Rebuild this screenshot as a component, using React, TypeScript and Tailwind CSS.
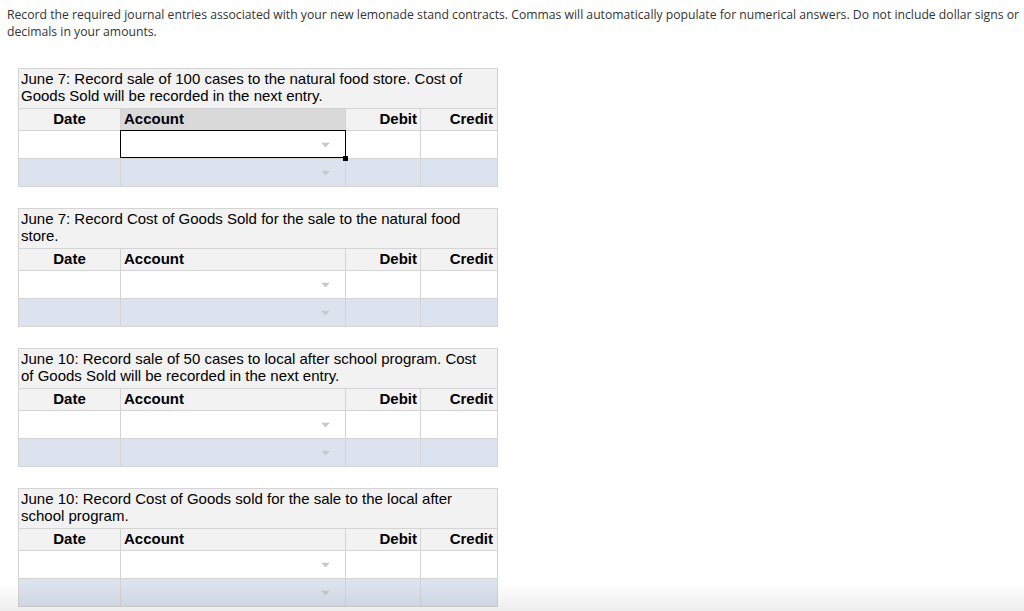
import React from "react";

const entries = [
  {
    title:
      "June 7: Record sale of 100 cases to the natural food store. Cost of Goods Sold will be recorded in the next entry.",
    focused: true,
  },
  {
    title: "June 7: Record Cost of Goods Sold for the sale to the natural food store.",
    focused: false,
  },
  {
    title:
      "June 10: Record sale of 50 cases to local after school program. Cost of Goods Sold will be recorded in the next entry.",
    focused: false,
  },
  {
    title: "June 10: Record Cost of Goods sold for the sale to the local after school program.",
    focused: false,
  },
];

function Arrow() {
  return (
    <svg width="9" height="5" viewBox="0 0 9 5" className="absolute right-[15px] top-1/2 -translate-y-1/2">
      <path d="M0 0 L9 0 L4.5 5 Z" fill="#c8c8c8" />
    </svg>
  );
}

function Row({ shaded, focused }: { shaded: boolean; focused: boolean }) {
  const bg = shaded ? "bg-[#dce3ef]" : "bg-white";
  return (
    <div className={`grid grid-cols-[102px_225px_75px_75px] h-[28px] border-t border-[#d4d4d4] ${bg}`}>
      <div className="border-r border-[#d4d4d4]" />
      <div className="relative border-r border-[#d4d4d4]">
        {focused && (
          <>
            <div className="absolute -left-[1px] -top-[1px] right-[-1px] bottom-0 border border-black" />
            <div className="absolute -right-[3px] -bottom-[3px] w-[5px] h-[5px] bg-black z-10" />
          </>
        )}
        <Arrow />
      </div>
      <div className="border-r border-[#d4d4d4]" />
      <div />
    </div>
  );
}

function Entry({ title, focused }: { title: string; focused: boolean }) {
  return (
    <div className="w-[480px] border border-[#d4d4d4] font-['Liberation_Sans',Arial,sans-serif] text-black">
      <div className="h-[39px] bg-[#f2f2f2] pl-[2px] pr-[12px] pt-[1px] text-[15px] leading-[17px]">{title}</div>
      <div className="grid grid-cols-[102px_225px_75px_75px] h-[22px] border-t border-[#d4d4d4] bg-[#f2f2f2] text-[15px] font-bold leading-[19px]">
        <div className="border-r border-[#d4d4d4] text-center">Date</div>
        <div className={`border-r border-[#d4d4d4] pl-[3px] ${focused ? "bg-[#d9d9d9]" : ""}`}>Account</div>
        <div className="border-r border-[#d4d4d4] text-right pr-[3px]">Debit</div>
        <div className="text-right pr-[3px]">Credit</div>
      </div>
      <Row shaded={false} focused={focused} />
      <Row shaded={true} focused={false} />
    </div>
  );
}

export default function App() {
  return (
    <div className="relative w-[1024px] h-[611px] overflow-hidden bg-white">
      <p className="pl-[7px] pr-[1px] pt-[6px] text-[12.2px] leading-[17px] text-[#333] font-['Open_Sans',sans-serif]">
        Record the required journal entries associated with your new lemonade stand contracts. Commas will
        automatically populate for numerical answers. Do not include dollar signs or decimals in your amounts.
      </p>
      <div className="ml-[18px] mt-[28px] flex flex-col gap-[21px]">
        {entries.map((e, i) => (
          <Entry key={i} title={e.title} focused={e.focused} />
        ))}
      </div>
      <div className="pointer-events-none absolute bottom-0 left-0 right-0 h-[28px] bg-gradient-to-b from-transparent to-[#00000012]" />
    </div>
  );
}
